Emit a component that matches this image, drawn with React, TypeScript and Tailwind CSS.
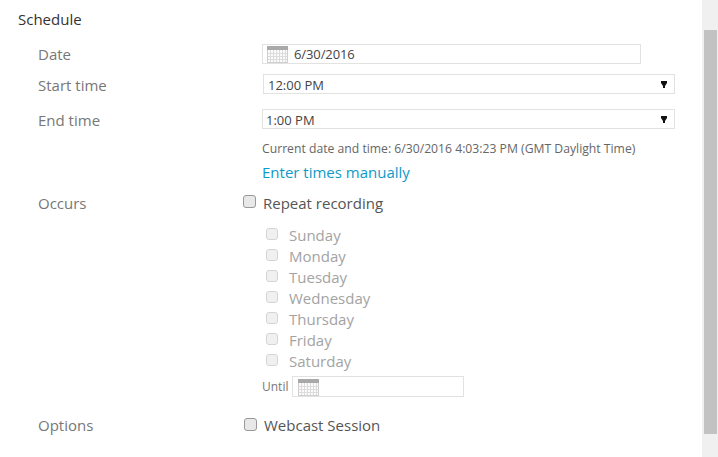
const days = ['Sunday', 'Monday', 'Tuesday', 'Wednesday', 'Thursday', 'Friday', 'Saturday'];

function CalendarIcon() {
  const cols = [3, 6, 9, 12, 15, 18];
  const rows = [7, 10, 13];
  return (
    <svg width="21" height="17" viewBox="0 0 21 17" className="shrink-0">
      <rect x="0.5" y="0.5" width="20" height="16" fill="#fbfbfb" stroke="#cfcfcf" />
      <rect x="0" y="0" width="21" height="4" fill="#a9a9a9" />
      {cols.map((x) => (
        <line key={x} x1={x + 0.5} y1="4" x2={x + 0.5} y2="16" stroke="#dcdcdc" />
      ))}
      {rows.map((y) => (
        <line key={y} x1="1" y1={y + 0.5} x2="20" y2={y + 0.5} stroke="#dcdcdc" />
      ))}
    </svg>
  );
}

function Arrow() {
  return (
    <svg width="6" height="7" viewBox="0 0 6 7" className="shrink-0">
      <path d="M0 0H6V2L4 5V7H2V5L0 2Z" fill="#111" />
    </svg>
  );
}

function Check({ faded, className = '' }: { faded?: boolean; className?: string }) {
  return faded ? (
    <span className={`block w-3 h-3 shrink-0 rounded-[3px] border border-[#d4d4d4] bg-[#f0f0f0] ${className}`} />
  ) : (
    <span className={`block w-[13px] h-[13px] shrink-0 rounded-[3px] border border-[#999] bg-[#e8e8e8] ${className}`} />
  );
}

function Select({ value, className }: { value: string; className: string }) {
  return (
    <div className={`h-5 border border-[#e2e2e2] flex items-center justify-between pr-[7px] text-[13px] text-[#444] ${className}`}>
      <span className="mt-[4px]">{value}</span>
      <Arrow />
    </div>
  );
}

export default function App() {
  return (
    <div className="flex w-[718px] h-[457px] overflow-hidden bg-white text-[#777] font-['Open_Sans','Liberation_Sans',sans-serif]">
      <div className="w-[702px]">
        <h2 className="ml-[18px] mt-[10px] h-[18px] leading-[18px] text-[15px] text-[#333]">Schedule</h2>

        <div className="mt-[16px] flex h-5 items-center">
          <div className="w-[224px] pl-[38px] shrink-0 text-[15px]">Date</div>
          <div className="w-[379px] ml-[38px] h-5 border border-[#e2e2e2] flex items-end pl-[4px] text-[13px] text-[#444]">
            <CalendarIcon />
            <span className="ml-[6px] self-center mt-[2px] tracking-[-0.1px]">6/30/2016</span>
          </div>
        </div>

        <div className="mt-[10px] flex h-5 items-center">
          <div className="w-[263px] pl-[38px] shrink-0 text-[15px] mt-[2px]">Start time</div>
          <Select value="12:00 PM" className="w-[412px] pl-[4px]" />
        </div>

        <div className="mt-[15px] flex h-5 items-center">
          <div className="w-[262px] pl-[38px] shrink-0 text-[15px] mt-[2px]">End time</div>
          <Select value="1:00 PM" className="w-[413px] pl-[3px]" />
        </div>

        <p className="ml-[262px] mt-[11px] h-[18px] leading-[18px] text-[12.2px] text-[#666]">
          Current date and time: 6/30/2016 4:03:23 PM (GMT Daylight Time)
        </p>
        <a className="block ml-[262px] mt-[4px] h-5 leading-5 text-[15px] text-[#0e9ac8]">Enter times manually</a>

        <div className="mt-[11px] flex h-5 items-center">
          <div className="w-[243px] pl-[38px] shrink-0 text-[15px]">Occurs</div>
          <Check className="mb-[3px]" />
          <span className="ml-[7px] text-[15px] text-[#555]">Repeat recording</span>
        </div>

        <ul className="mt-[12px] ml-[266px]">
          {days.map((day) => (
            <li key={day} className="flex h-[21px] items-center">
              <Check faded className="mb-[4px]" />
              <span className="ml-[11px] text-[15px] text-[#a3a3a3]">{day}</span>
            </li>
          ))}
        </ul>

        <div className="mt-[4px] ml-[262px] flex h-[21px] items-center">
          <span className="w-[30px] text-[12px] text-[#777]">Until</span>
          <div className="w-[172px] h-[21px] border border-[#e2e2e2] flex items-end pl-[5px]">
            <CalendarIcon />
          </div>
        </div>

        <div className="mt-[18px] flex h-5 items-center">
          <div className="w-[244px] pl-[38px] shrink-0 text-[15px]">Options</div>
          <Check className="mb-[2px]" />
          <span className="ml-[7px] text-[15px] text-[#555]">Webcast Session</span>
        </div>
      </div>

      <div className="w-[16px] h-full bg-[#f0f0f0] pl-[2px] pr-px pt-[30px] pb-[23px]">
        <div className="h-full bg-[#c2c2c2]" />
      </div>
    </div>
  );
}
